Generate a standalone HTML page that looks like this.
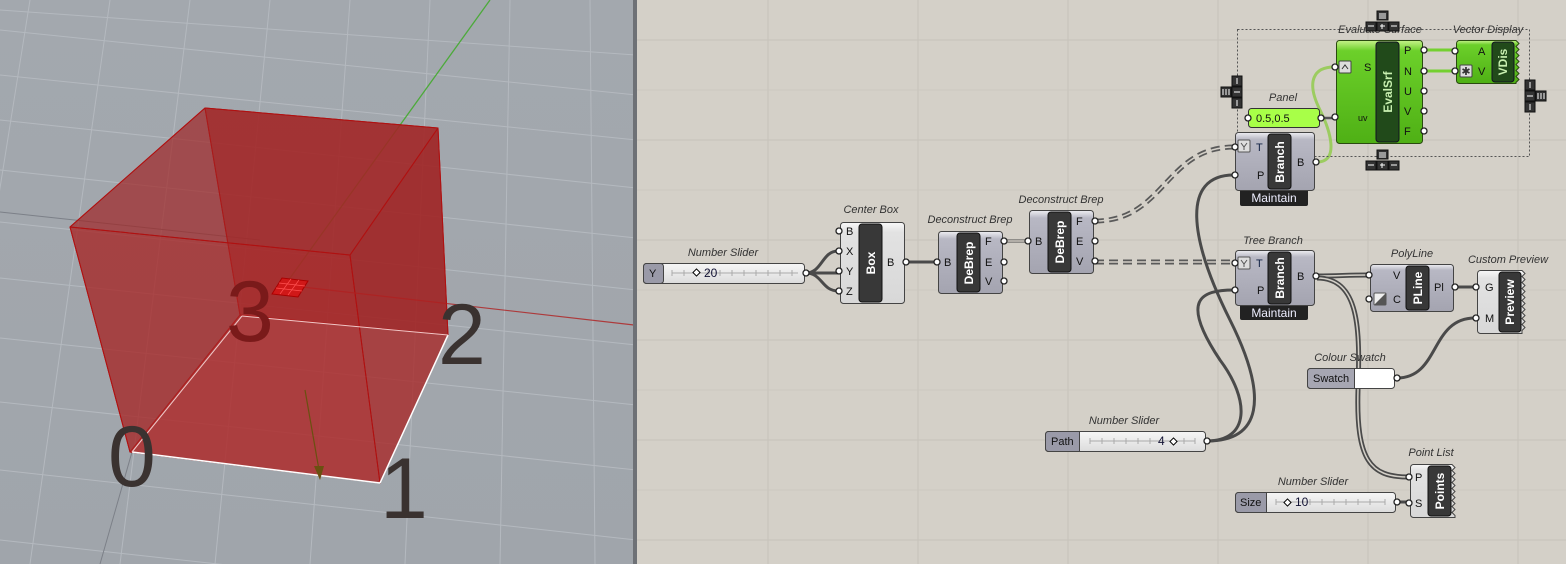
<!DOCTYPE html>
<html><head><meta charset="utf-8"><style>
html,body{margin:0;padding:0;width:1566px;height:564px;overflow:hidden;background:#d4d0c8}
svg{display:block;overflow:hidden}
text{font-family:"Liberation Sans","DejaVu Sans",sans-serif}
.t{font-style:italic;font-size:11px;fill:#333;text-anchor:middle}
.p{font-size:11px;fill:#111}
.lb{font-size:12px;font-weight:bold;fill:#fff;text-anchor:middle}
.w{fill:none;stroke:#4a4a4a;stroke-width:3}
.dash{fill:none;stroke:#5a5a5a;stroke-width:5;stroke-dasharray:9 5}
.dashin{fill:none;stroke:#d4d0c8;stroke-width:1.5}
.grip{fill:#fff;stroke:#222;stroke-width:1.3}
</style></head><body>
<svg width="1566" height="564" viewBox="0 0 1566 564" xmlns="http://www.w3.org/2000/svg">
<defs>
<linearGradient id="vp" x1="0" y1="0" x2="0" y2="1"><stop offset="0" stop-color="#a3a8ae"/><stop offset="1" stop-color="#a0a5ab"/></linearGradient>
<linearGradient id="gb" x1="0" y1="0" x2="0" y2="1"><stop offset="0" stop-color="#eeeef2"/><stop offset="0.12" stop-color="#b8b8c4"/><stop offset="1" stop-color="#a4a4b0"/></linearGradient>
<linearGradient id="lb" x1="0" y1="0" x2="0" y2="1"><stop offset="0" stop-color="#f8f8f8"/><stop offset="0.12" stop-color="#e2e2e2"/><stop offset="1" stop-color="#d8d8d8"/></linearGradient>
<linearGradient id="gr" x1="0" y1="0" x2="0" y2="1"><stop offset="0" stop-color="#c6f28a"/><stop offset="0.1" stop-color="#6cd02a"/><stop offset="1" stop-color="#4fb015"/></linearGradient>
<linearGradient id="sl" x1="0" y1="0" x2="0" y2="1"><stop offset="0" stop-color="#f6f6f6"/><stop offset="1" stop-color="#dcdcdc"/></linearGradient>
<clipPath id="vc"><rect x="0" y="0" width="634" height="564"/></clipPath>
</defs>

<!-- LEFT VIEWPORT -->
<g clip-path="url(#vc)">
<rect x="0" y="0" width="636" height="564" fill="url(#vp)"/>
<g stroke="#b4b9bf" stroke-width="1" fill="none">
<path d="M0,30 L636,95 M0,75 L636,140 M0,120 L636,188 M0,170 L636,238 M0,222 L636,290 M0,278 L636,345 M0,338 L636,405 M0,402 L636,470 M0,470 L636,540 M0,540 L636,610 M0,10 L636,55"/>
<path d="M30,0 L-60,564 M110,0 L30,564 M190,0 L120,564 M270,0 L215,564 M350,0 L310,564 M430,0 L405,564 M510,0 L500,564 M590,0 L595,564"/>
</g>
<line x1="0" y1="212" x2="260" y2="240" stroke="#7c8088" stroke-width="1"/>
<line x1="100" y1="564" x2="132" y2="452" stroke="#7c8088" stroke-width="1"/>
<line x1="490" y1="0" x2="285" y2="285" stroke="#4caa3a" stroke-width="1.3"/>
<g stroke="#b01010" stroke-width="1" stroke-linejoin="round">
<polygon points="205,108 438,128 448,335 240,315" fill="rgba(160,35,35,0.8)"/>
<polygon points="70,227 205,108 240,315 130,452" fill="rgba(150,30,30,0.45)"/>
<polygon points="240,315 448,335 380,483 130,452" fill="rgba(180,50,50,0.6)"/>
<polygon points="70,227 350,255 380,483 130,452" fill="rgba(170,40,40,0.6)"/>
<polygon points="350,255 438,128 448,335 380,483" fill="rgba(160,35,35,0.5)"/>
<polygon points="70,227 205,108 438,128 350,255" fill="rgba(165,40,40,0.45)"/>
</g>
<line x1="285" y1="285" x2="634" y2="325" stroke="#b02020" stroke-width="1.2" opacity="0.8"/>
<polygon points="272,294 282,278 308,281 298,297" fill="#d01818" stroke="#a00" stroke-width="1"/>
<path d="M276,288 L302,291 M279,283 L305,286 M280,294 L291,279 M288,295 L299,280" stroke="#ff5050" stroke-width="0.7"/>
<line x1="132" y1="452" x2="380" y2="483" stroke="#fff" stroke-width="1.5"/>
<line x1="380" y1="483" x2="448" y2="335" stroke="#fff" stroke-width="1.5"/>
<line x1="132" y1="452" x2="242" y2="316" stroke="#f0c8c8" stroke-width="1"/>
<line x1="242" y1="316" x2="448" y2="335" stroke="#f0c8c8" stroke-width="1"/>
<line x1="305" y1="390" x2="319" y2="470" stroke="#6a5010" stroke-width="1.2"/>
<polygon points="314,466 324,466 320,480" fill="#6a5010"/>
<g font-family="Liberation Sans,DejaVu Sans,sans-serif" font-size="86" fill="#3a3230">
<text x="108" y="486">0</text>
<text x="380" y="518">1</text>
<text x="438" y="364">2</text>
<text x="226" y="341" fill="#7a1a1a">3</text>
</g>
</g>
<rect x="633" y="0" width="4" height="564" fill="#6e7176"/>

<!-- CANVAS GRID -->
<g stroke="#c6c2ba" stroke-width="1">
<path d="M768,0V564M918,0V564M1068,0V564M1218,0V564M1368,0V564M1518,0V564"/>
<path d="M637,40H1566M637,140H1566M637,240H1566M637,340H1566M637,440H1566M637,540H1566"/>
</g>
<g stroke="#ccc8c0" stroke-width="1">
<path d="M637,90H1566M637,190H1566M637,290H1566M637,390H1566M637,490H1566"/>
</g>

<!-- WIRES -->
<path class="w" d="M806,273 C822,273 822,251 838,251"/>
<path class="w" d="M806,273 H838"/>
<path class="w" d="M806,273 C822,273 822,291 838,291"/>
<path class="w" d="M906,262 H936"/>
<path class="w" d="M1005,241 H1027" stroke-width="5"/><path d="M1005,241 H1027" stroke="#d4d0c8" stroke-width="1.5"/>
<path class="dash" d="M1095,221 C1165,221 1165,147 1234,147"/><path class="dashin" d="M1095,221 C1165,221 1165,147 1234,147"/>
<path class="dash" d="M1095,262 H1234"/><path class="dashin" d="M1095,262 H1234"/>
<path class="w" d="M1207,441 C1260,441 1270,400 1230,320 C1190,240 1180,175 1234,175"/>
<path class="w" d="M1207,441 C1250,441 1250,400 1220,360 C1180,300 1200,290 1234,290"/>
<path fill="none" stroke="#9ccc60" stroke-width="3" d="M1317,162 C1340,162 1330,130 1320,110 C1305,80 1315,67 1334,67"/>
<path fill="none" stroke="#555" stroke-width="2.5" d="M1321,118 H1334"/>
<path fill="none" stroke="#74d030" stroke-width="3" d="M1424,50 H1454 M1424,71 H1454"/>
<path fill="none" stroke="#4a4a4a" stroke-width="5" d="M1317,276 C1340,276 1345,275 1368,275"/>
<path fill="none" stroke="#d4d0c8" stroke-width="1.5" d="M1317,276 C1340,276 1345,275 1368,275"/>
<path fill="none" stroke="#4a4a4a" stroke-width="5" d="M1317,278 C1360,278 1360,330 1358,390 C1356,460 1370,477 1408,477"/>
<path fill="none" stroke="#d4d0c8" stroke-width="1.5" d="M1317,278 C1360,278 1360,330 1358,390 C1356,460 1370,477 1408,477"/>
<path class="w" d="M1455,287 H1475"/>
<path class="w" d="M1397,378 C1440,378 1430,318 1475,318"/>
<path class="w" d="M1397,502 H1408"/>

<rect x="1237.5" y="29.5" width="292" height="127" fill="none" stroke="#555" stroke-dasharray="2 2"/>

<!-- Number Slider Y -->
<text class="t" x="723" y="256">Number Slider</text>
<rect x="643.5" y="263.5" width="161" height="20" rx="3" fill="url(#sl)" stroke="#444"/>
<rect x="643.5" y="263.5" width="20" height="20" rx="3" fill="#9a9aa8" stroke="#444"/>
<text class="p" x="649" y="277" font-size="12">Y</text>
<path d="M672,273H798 M672,270v6 M684,270v6 M708,270v6 M720,270v6 M732,270v6 M744,270v6 M756,270v6 M768,270v6 M780,270v6 M792,270v6" stroke="#aaa"/>
<rect x="694" y="270" width="5" height="5" transform="rotate(45 696.5 272.5)" fill="#fff" stroke="#000"/>
<text x="704" y="277" font-size="12" fill="#113">20</text>
<circle class="grip" cx="806" cy="273" r="3"/>

<!-- Center Box -->
<text class="t" x="871" y="213">Center Box</text>
<rect x="840.5" y="222.5" width="64" height="81" rx="3" fill="url(#lb)" stroke="#444"/>
<rect x="859" y="224" width="23" height="78" rx="3" fill="#383838" stroke="#111"/>
<text class="lb" transform="translate(875,263) rotate(-90)">Box</text>
<g class="p" font-size="12"><text x="846" y="235">B</text><text x="846" y="255">X</text><text x="846" y="275">Y</text><text x="846" y="295">Z</text><text x="887" y="266">B</text></g>
<g><circle class="grip" cx="839" cy="231" r="3"/><circle class="grip" cx="839" cy="251" r="3"/><circle class="grip" cx="839" cy="271" r="3"/><circle class="grip" cx="839" cy="291" r="3"/><circle class="grip" cx="906" cy="262" r="3"/></g>

<!-- DeBrep 1 -->
<text class="t" x="970" y="223">Deconstruct Brep</text>
<rect x="938.5" y="231.5" width="64" height="62" rx="3" fill="url(#gb)" stroke="#444"/>
<rect x="957" y="233" width="23" height="59" rx="3" fill="#383838" stroke="#111"/>
<text class="lb" transform="translate(973,263) rotate(-90)">DeBrep</text>
<g class="p" font-size="12"><text x="944" y="266">B</text><text x="985" y="245">F</text><text x="985" y="266">E</text><text x="985" y="285">V</text></g>
<circle class="grip" cx="937" cy="262" r="3"/><circle class="grip" cx="1004" cy="241" r="3"/><circle class="grip" cx="1004" cy="262" r="3"/><circle class="grip" cx="1004" cy="281" r="3"/>

<!-- DeBrep 2 -->
<text class="t" x="1061" y="203">Deconstruct Brep</text>
<rect x="1029.5" y="210.5" width="64" height="63" rx="3" fill="url(#gb)" stroke="#444"/>
<rect x="1048" y="212" width="23" height="60" rx="3" fill="#383838" stroke="#111"/>
<text class="lb" transform="translate(1064,242) rotate(-90)">DeBrep</text>
<g class="p" font-size="12"><text x="1035" y="245">B</text><text x="1076" y="225">F</text><text x="1076" y="245">E</text><text x="1076" y="265">V</text></g>
<circle class="grip" cx="1028" cy="241" r="3"/><circle class="grip" cx="1095" cy="221" r="3"/><circle class="grip" cx="1095" cy="241" r="3"/><circle class="grip" cx="1095" cy="261" r="3"/>

<!-- Panel -->
<text class="t" x="1283" y="101">Panel</text>
<rect x="1248.5" y="108.5" width="71" height="19" rx="3" fill="#a8ff48" stroke="#333"/>
<text x="1256" y="122" font-family="Liberation Mono,monospace" font-size="11" fill="#111">0.5,0.5</text>
<circle class="grip" cx="1248" cy="118" r="3"/><circle class="grip" cx="1321" cy="118" r="3"/>

<!-- Branch 1 -->
<rect x="1240" y="186" width="68" height="20" rx="2" fill="#222"/>
<text x="1274" y="202" font-size="12" fill="#eef" text-anchor="middle">Maintain</text>
<rect x="1235.5" y="132.5" width="79" height="58" rx="3" fill="url(#gb)" stroke="#444"/>
<rect x="1268" y="134" width="23" height="55" rx="3" fill="#383838" stroke="#111"/>
<text class="lb" transform="translate(1284,162) rotate(-90)">Branch</text>
<rect x="1238" y="140" width="12" height="12" rx="1" fill="#ddd" stroke="#555"/>
<path d="M1241,143 l3,4 l3,-4 M1244,147 v3" stroke="#555" fill="none"/>
<g class="p" font-size="12"><text x="1256" y="151" fill="#124">T</text><text x="1257" y="179">P</text><text x="1297" y="166">B</text></g>
<circle class="grip" cx="1235" cy="147" r="3"/><circle class="grip" cx="1235" cy="175" r="3"/><circle class="grip" cx="1316" cy="162" r="3"/>

<!-- EvalSrf -->
<text class="t" x="1380" y="33">Evaluate Surface</text>
<rect x="1336.5" y="40.5" width="86" height="103" rx="3" fill="url(#gr)" stroke="#2a4a10"/>
<rect x="1376" y="42" width="23" height="100" rx="3" fill="#214a1a" stroke="#112"/>
<text class="lb" transform="translate(1392,92) rotate(-90)" style="fill:#c8f0b0">EvalSrf</text>
<rect x="1339" y="61" width="12" height="12" rx="1" fill="#ddd" stroke="#444"/>
<path d="M1342,69 l3,-4 l3,4" stroke="#333" fill="none"/>
<g class="p" font-size="12"><text x="1364" y="71">S</text><text x="1358" y="121" font-size="9">uv</text><text x="1404" y="54">P</text><text x="1404" y="75">N</text><text x="1404" y="95">U</text><text x="1404" y="115">V</text><text x="1404" y="135">F</text></g>
<circle class="grip" cx="1335" cy="67" r="3"/><circle class="grip" cx="1335" cy="117" r="3"/>
<circle class="grip" cx="1424" cy="50" r="3"/><circle class="grip" cx="1424" cy="71" r="3"/><circle class="grip" cx="1424" cy="91" r="3"/><circle class="grip" cx="1424" cy="111" r="3"/><circle class="grip" cx="1424" cy="131" r="3"/>
<g fill="#333" stroke="#111">
<rect x="1377" y="11" width="11" height="9"/><rect x="1366" y="22" width="10" height="9"/><rect x="1377" y="22" width="11" height="9"/><rect x="1389" y="22" width="10" height="9"/>
<rect x="1377" y="150" width="11" height="9"/><rect x="1366" y="161" width="10" height="9"/><rect x="1377" y="161" width="11" height="9"/><rect x="1389" y="161" width="10" height="9"/>
<rect x="1221" y="87" width="10" height="10"/><rect x="1232" y="76" width="10" height="10"/><rect x="1232" y="87" width="10" height="10"/><rect x="1232" y="98" width="10" height="10"/>
<rect x="1525" y="80" width="10" height="10"/><rect x="1525" y="91" width="10" height="10"/><rect x="1525" y="102" width="10" height="10"/><rect x="1536" y="91" width="10" height="10"/>
</g>
<g stroke="#fff" fill="none" stroke-width="1">
<path d="M1379,14h7M1379,16h7M1379,18h7 M1379,153h7M1379,155h7M1379,157h7 M1382,24v5M1380,26h5 M1382,163v5M1380,165h5 M1368,26h6 M1391,26h6 M1368,165h6 M1391,165h6"/>
<path d="M1223,89v6M1226,89v6M1229,89v6 M1538,93v6M1541,93v6M1544,93v6 M1237,78v6 M1237,100v6 M1234,92h6 M1530,82v6 M1530,104v6 M1527,96h6"/>
</g>

<!-- Vector Display -->
<text class="t" x="1488" y="33">Vector Display</text>
<path d="M1459.5,40.5 H1516 l3,3 -3,3 3,3 -3,3 3,3 -3,3 3,3 -3,3 3,3 -3,3 3,3 -3,3 3,3 -3,3 V83.5 H1459.5 a3,3 0 0 1 -3,-3 V43.5 a3,3 0 0 1 3,-3z" fill="url(#gr)" stroke="#2a4a10"/>
<rect x="1492" y="42" width="22" height="40" rx="3" fill="#214a1a" stroke="#112"/>
<text class="lb" transform="translate(1507,62) rotate(-90)" style="fill:#c8f0b0">VDis</text>
<rect x="1460" y="65" width="12" height="12" rx="1" fill="#ddd" stroke="#444"/>
<text x="1466" y="75" font-size="11" fill="#333" text-anchor="middle">✱</text>
<g class="p" font-size="12"><text x="1478" y="55">A</text><text x="1478" y="75">V</text></g>
<circle class="grip" cx="1455" cy="51" r="3"/><circle class="grip" cx="1455" cy="71" r="3"/>

<!-- Tree Branch -->
<text class="t" x="1273" y="244">Tree Branch</text>
<rect x="1240" y="300" width="68" height="20" rx="2" fill="#222"/>
<text x="1274" y="317" font-size="12" fill="#eef" text-anchor="middle">Maintain</text>
<rect x="1235.5" y="250.5" width="79" height="55" rx="3" fill="url(#gb)" stroke="#444"/>
<rect x="1268" y="252" width="23" height="52" rx="3" fill="#383838" stroke="#111"/>
<text class="lb" transform="translate(1284,278) rotate(-90)">Branch</text>
<rect x="1238" y="257" width="12" height="12" rx="1" fill="#ddd" stroke="#555"/>
<path d="M1241,260 l3,4 l3,-4 M1244,264 v3" stroke="#555" fill="none"/>
<g class="p" font-size="12"><text x="1256" y="267" fill="#124">T</text><text x="1257" y="294">P</text><text x="1297" y="280">B</text></g>
<circle class="grip" cx="1235" cy="263" r="3"/><circle class="grip" cx="1235" cy="290" r="3"/><circle class="grip" cx="1316" cy="276" r="3"/>

<!-- PolyLine -->
<text class="t" x="1412" y="257">PolyLine</text>
<rect x="1370.5" y="264.5" width="83" height="47" rx="3" fill="url(#gb)" stroke="#444"/>
<rect x="1406" y="266" width="23" height="44" rx="3" fill="#383838" stroke="#111"/>
<text class="lb" transform="translate(1422,288) rotate(-90)">PLine</text>
<rect x="1374" y="293" width="12" height="12" rx="1" fill="#eee" stroke="#555"/>
<path d="M1374,305 L1386,293 V305 Z" fill="#555"/>
<g class="p" font-size="12"><text x="1393" y="279">V</text><text x="1393" y="303">C</text><text x="1434" y="291">Pl</text></g>
<circle class="grip" cx="1369" cy="275" r="3"/><circle class="grip" cx="1369" cy="299" r="3"/><circle class="grip" cx="1455" cy="287" r="3"/>

<!-- Custom Preview -->
<text class="t" x="1508" y="263">Custom Preview</text>
<path d="M1480.5,270.5 H1522 l3,3 -3,3 3,3 -3,3 3,3 -3,3 3,3 -3,3 3,3 -3,3 3,3 -3,3 3,3 -3,3 3,3 -3,3 3,3 -3,3 3,3 -3,3 V333.5 H1480.5 a3,3 0 0 1 -3,-3 V273.5 a3,3 0 0 1 3,-3z" fill="url(#lb)" stroke="#444"/>
<rect x="1499" y="272" width="22" height="60" rx="3" fill="#383838" stroke="#111"/>
<text class="lb" transform="translate(1514,302) rotate(-90)">Preview</text>
<g class="p" font-size="12"><text x="1485" y="291">G</text><text x="1485" y="322">M</text></g>
<circle class="grip" cx="1476" cy="287" r="3"/><circle class="grip" cx="1476" cy="318" r="3"/>

<!-- Colour Swatch -->
<text class="t" x="1350" y="361">Colour Swatch</text>
<rect x="1307.5" y="368.5" width="87" height="20" rx="3" fill="#fff" stroke="#444"/>
<path d="M1310.5,368.5 H1354.5 V388.5 H1310.5 a3,3 0 0 1 -3,-3 V371.5 a3,3 0 0 1 3,-3z" fill="#a6a6b2" stroke="#444"/>
<text class="p" x="1313" y="382" font-size="12">Swatch</text>
<circle class="grip" cx="1397" cy="378" r="3"/>

<!-- Path slider -->
<text class="t" x="1124" y="424">Number Slider</text>
<rect x="1045.5" y="431.5" width="160" height="20" rx="3" fill="url(#sl)" stroke="#444"/>
<path d="M1048.5,431.5 H1079.5 V451.5 H1048.5 a3,3 0 0 1 -3,-3 V434.5 a3,3 0 0 1 3,-3z" fill="#9a9aa8" stroke="#444"/>
<text class="p" x="1051" y="445" font-size="12">Path</text>
<path d="M1090,441H1195 M1090,438v6 M1102,438v6 M1114,438v6 M1126,438v6 M1138,438v6 M1150,438v6 M1184,438v6 M1195,438v6" stroke="#aaa"/>
<text x="1158" y="445" font-size="12" fill="#113">4</text>
<rect x="1171" y="439" width="5" height="5" transform="rotate(45 1173.5 441.5)" fill="#fff" stroke="#000"/>
<circle class="grip" cx="1207" cy="441" r="3"/>

<!-- Size slider -->
<text class="t" x="1313" y="485">Number Slider</text>
<rect x="1235.5" y="492.5" width="160" height="20" rx="3" fill="url(#sl)" stroke="#444"/>
<path d="M1238.5,492.5 H1266.5 V512.5 H1238.5 a3,3 0 0 1 -3,-3 V495.5 a3,3 0 0 1 3,-3z" fill="#9a9aa8" stroke="#444"/>
<text class="p" x="1240" y="506" font-size="12">Size</text>
<path d="M1276,502H1385 M1276,499v6 M1310,499v6 M1322,499v6 M1334,499v6 M1346,499v6 M1358,499v6 M1370,499v6 M1385,499v6" stroke="#aaa"/>
<rect x="1285" y="500" width="5" height="5" transform="rotate(45 1287.5 502.5)" fill="#fff" stroke="#000"/>
<text x="1295" y="506" font-size="12" fill="#113">10</text>
<circle class="grip" cx="1397" cy="502" r="3"/>

<!-- Point List -->
<text class="t" x="1431" y="456">Point List</text>
<path d="M1413.5,464.5 H1452 l3,3 -3,3 3,3 -3,3 3,3 -3,3 3,3 -3,3 3,3 -3,3 3,3 -3,3 3,3 -3,3 3,3 -3,3 3,3 V517.5 H1413.5 a3,3 0 0 1 -3,-3 V467.5 a3,3 0 0 1 3,-3z" fill="url(#lb)" stroke="#444"/>
<rect x="1428" y="466" width="23" height="50" rx="3" fill="#383838" stroke="#111"/>
<text class="lb" transform="translate(1444,491) rotate(-90)">Points</text>
<g class="p" font-size="12"><text x="1415" y="481">P</text><text x="1415" y="507">S</text></g>
<circle class="grip" cx="1409" cy="477" r="3"/><circle class="grip" cx="1409" cy="503" r="3"/>
</svg>
</body></html>
